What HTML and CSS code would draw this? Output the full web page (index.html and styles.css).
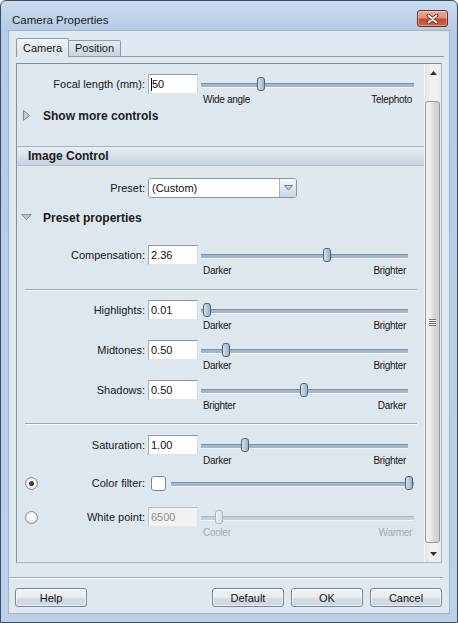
FILE: index.html
```html
<!DOCTYPE html>
<html>
<head>
<meta charset="utf-8">
<title>Camera Properties</title>
<link rel="stylesheet" href="styles.css">
</head>
<body>
<div class="window">
  <div class="titlebar">
    <span class="title">Camera Properties</span>
    <div class="close">
      <svg width="13" height="10" viewBox="0 0 13 10">
        <path d="M2.5 1.5 L10.5 8.5 M10.5 1.5 L2.5 8.5" stroke="#4a1c14" stroke-width="3.6" stroke-linecap="round"/>
        <path d="M2.5 1.5 L10.5 8.5 M10.5 1.5 L2.5 8.5" stroke="#ffffff" stroke-width="2" stroke-linecap="round"/>
      </svg>
    </div>
  </div>
  <div class="client">
    <div class="tabs">
      <div class="tab active">Camera</div>
      <div class="tab">Position</div>
    </div>
    <div class="panel">
      <div class="content">
        <div class="row focal">
          <span class="lbl">Focal length (mm):</span>
          <span class="field"><span class="caret"></span>50</span>
          <div class="slider long">
            <div class="track"><i class="thumb" style="left:56px"></i></div>
            <div class="ends"><span>Wide angle</span><span>Telephoto</span></div>
          </div>
        </div>
        <div class="expander">
          <span class="exp-icon"><svg width="7" height="11" viewBox="0 0 7 11"><polygon points="0.5,0.5 6.5,5.5 0.5,10.5" fill="#c3ccd6" stroke="#7b8a9b"/></svg></span>
          <span class="exp-text">Show more controls</span>
        </div>
        <div class="section-head">Image Control</div>
        <div class="row preset">
          <span class="lbl">Preset:</span>
          <div class="combo">
            <span class="combo-text">(Custom)</span>
            <span class="combo-btn"><svg width="9" height="6" viewBox="0 0 9 6"><polygon points="0.5,0.5 8.5,0.5 4.5,5" fill="#c9d3de" stroke="#6a7c8f"/></svg></span>
          </div>
        </div>
        <div class="expander open">
          <span class="exp-icon"><svg width="11" height="6" viewBox="0 0 11 6"><polygon points="0.5,0.5 10.5,0.5 5.5,5.5" fill="#b7c3cf" stroke="#8593a3"/></svg></span>
          <span class="exp-text">Preset properties</span>
        </div>
        <div class="row comp">
          <span class="lbl">Compensation:</span>
          <span class="field">2.36</span>
          <div class="slider">
            <div class="track"><i class="thumb" style="left:122px"></i></div>
            <div class="ends"><span>Darker</span><span>Brighter</span></div>
          </div>
        </div>
        <div class="sep sep-a"></div>
        <div class="row highlights">
          <span class="lbl">Highlights:</span>
          <span class="field">0.01</span>
          <div class="slider">
            <div class="track"><i class="thumb" style="left:2px"></i></div>
            <div class="ends"><span>Darker</span><span>Brighter</span></div>
          </div>
        </div>
        <div class="row tone">
          <span class="lbl">Midtones:</span>
          <span class="field">0.50</span>
          <div class="slider">
            <div class="track"><i class="thumb" style="left:21px"></i></div>
            <div class="ends"><span>Darker</span><span>Brighter</span></div>
          </div>
        </div>
        <div class="row tone">
          <span class="lbl">Shadows:</span>
          <span class="field">0.50</span>
          <div class="slider">
            <div class="track"><i class="thumb" style="left:99px"></i></div>
            <div class="ends"><span>Brighter</span><span>Darker</span></div>
          </div>
        </div>
        <div class="sep sep-b"></div>
        <div class="row saturation">
          <span class="lbl">Saturation:</span>
          <span class="field">1.00</span>
          <div class="slider">
            <div class="track"><i class="thumb" style="left:40px"></i></div>
            <div class="ends"><span>Darker</span><span>Brighter</span></div>
          </div>
        </div>
        <div class="row filter">
          <span class="lbl"><span class="radio checked"></span><span class="lbl-text">Color filter:</span></span>
          <span class="swatch"></span>
          <div class="slider filter-slider">
            <div class="track"><i class="thumb" style="left:234px"></i></div>
          </div>
        </div>
        <div class="row white disabled">
          <span class="lbl"><span class="radio"></span><span class="lbl-text">White point:</span></span>
          <span class="field">6500</span>
          <div class="slider long">
            <div class="track"><i class="thumb" style="left:14px"></i></div>
            <div class="ends"><span>Cooler</span><span>Warmer</span></div>
          </div>
        </div>
      </div>
      <div class="scrollbar">
        <div class="sb-btn"><svg width="7" height="4" viewBox="0 0 7 4"><polygon points="0,4 7,4 3.5,0" fill="#2e2e2e"/></svg></div>
        <div class="sb-track">
          <div class="sb-thumb"><span class="grip"></span></div>
        </div>
        <div class="sb-btn"><svg width="7" height="4" viewBox="0 0 7 4"><polygon points="0,0 7,0 3.5,4" fill="#2e2e2e"/></svg></div>
      </div>
    </div>
    <div class="divider"></div>
    <div class="buttons">
      <button class="btn help">Help</button>
      <span class="spacer"></span>
      <button class="btn">Default</button>
      <button class="btn">OK</button>
      <button class="btn">Cancel</button>
    </div>
  </div>
</div>
</body>
</html>
```

FILE: styles.css
```css
* { box-sizing: border-box; }
html, body { margin: 0; padding: 0; background: #ffffff; }
body {
  font-family: "Liberation Sans", Arial, sans-serif;
  font-size: 11px;
  color: #1b1b1b;
}

.window {
  width: 458px;
  height: 623px;
  border: 1px solid #3d4d61;
  border-radius: 6px 6px 0 0;
  background: linear-gradient(#c9dbef 0, #b5cce6 29px, #bcd2ea 100%);
  display: flex;
  flex-direction: column;
  padding: 0 7px 8px 7px;
}

.titlebar {
  height: 29px;
  flex: none;
  display: flex;
  align-items: flex-start;
  justify-content: space-between;
  padding: 0 2px 0 4px;
}
.title {
  font-size: 11.5px;
  line-height: 14px;
  margin-top: 12px;
  color: #1a1a1a;
}
.close {
  margin-top: 9px;
  width: 31px;
  height: 17px;
  border: 1px solid #6a2c22;
  border-radius: 3px;
  background: linear-gradient(#e9ab9c 0%, #dc8f7d 45%, #c74a31 55%, #cf6045 100%);
  box-shadow: inset 0 0 0 1px rgba(255, 230, 220, 0.45);
  display: flex;
  align-items: center;
  justify-content: center;
}

.client {
  flex: 1;
  border: 1px solid #9fb4cb;
  background: #dfe7ef;
  padding: 7px 7px 0 7px;
  display: flex;
  flex-direction: column;
}

/* tabs */
.tabs {
  height: 19px;
  flex: none;
  display: flex;
  align-items: flex-end;
  border-bottom: 1px solid #8c9cae;
  margin-right: -2px;
}
.tab {
  width: 52px;
  height: 16px;
  line-height: 14px;
  text-align: center;
  border: 1px solid #8c9cae;
  border-left: none;
  border-bottom: none;
  border-radius: 0 2px 0 0;
  background: linear-gradient(#e4eaf1, #c9d4e0);
  color: #1b1b1b;
}
.tab.active {
  width: 53px;
  height: 19px;
  line-height: 18px;
  margin-bottom: -1px;
  border-left: 1px solid #8c9cae;
  border-radius: 2px 2px 0 0;
  background: linear-gradient(#f2f5f8, #e2e9f0 60%, #dfe7ef);
  position: relative;
}

/* panel */
.panel {
  margin-top: 6px;
  height: 500px;
  flex: none;
  border: 1px solid #8593a2;
  border-color: #7f8c9a #aab5c1 #aab5c1 #8593a2;
  background: #dfe7ee;
  display: flex;
}
.content {
  flex: 1;
  overflow: hidden;
}

.row {
  display: flex;
  align-items: flex-start;
}
.lbl {
  width: 128px;
  flex: none;
  height: 20px;
  line-height: 20px;
  text-align: right;
  display: flex;
  align-items: center;
  justify-content: flex-end;
  color: #161616;
}
.lbl-text { margin-left: auto; }
.field {
  width: 50px;
  height: 20px;
  flex: none;
  margin-left: 3px;
  background: #ffffff;
  border: 1px solid;
  border-color: #8f98a3 #d4d9df #e0e4e9 #a3abb5;
  line-height: 18px;
  padding-left: 2px;
  color: #111;
  display: flex;
  align-items: center;
}
.caret {
  display: inline-block;
  width: 1px;
  height: 13px;
  background: #000;
}

.slider {
  width: 207px;
  flex: none;
  margin-left: 3px;
}
.slider.long { width: 213px; }
.track {
  position: relative;
  height: 20px;
}
.track::before {
  content: "";
  position: absolute;
  left: 0;
  right: 0;
  top: 9px;
  height: 3px;
  border-top: 1px solid #7d91a5;
  border-bottom: 1px solid #f3f6f9;
  background: #a5b5c5;
}
.thumb {
  position: absolute;
  top: 3px;
  width: 8px;
  height: 14px;
  border: 1px solid #4f6377;
  border-radius: 3px;
  background: linear-gradient(to right, #d6e0ea, #b3c3d3 60%, #9cafc3);
}
.ends {
  display: flex;
  justify-content: space-between;
  padding: 0 2px;
  height: 12px;
  line-height: 12px;
  font-size: 10px;
  letter-spacing: -0.3px;
  color: #161616;
}

/* expanders */
.expander {
  height: 18px;
  display: flex;
  align-items: center;
  padding-left: 4px;
}
.exp-icon {
  width: 11px;
  display: flex;
  justify-content: center;
  margin-right: 11px;
}
.expander .exp-icon svg { display: block; }
.exp-text {
  font-size: 12px;
  font-weight: bold;
  color: #1a1a1a;
  margin-top: 2px;
}

.section-head {
  margin-top: 22px;
  height: 20px;
  border-top: 1px solid #a5b1be;
  border-bottom: 1px solid #b3c0cc;
  background: linear-gradient(#e8eef4, #d4dee7 60%, #c5d2de);
  line-height: 18px;
  padding-left: 11px;
  font-size: 12px;
  font-weight: bold;
  color: #1a1a1a;
}

/* vertical rhythm */
.row.focal { margin-top: 10px; }
.row.preset { margin-top: 12px; }
.expander.open { margin-top: 10px; }
.row.comp { margin-top: 19px; }
.row.highlights { margin-top: 9px; }
.row.tone { margin-top: 8px; }
.row.saturation { margin-top: 10px; }
.row.filter { margin-top: 8px; height: 16px; align-items: center; }
.row.white { margin-top: 16px; }

.sep {
  height: 2px;
  margin: 0 7px 0 8px;
  border-top: 1px solid #9aa6b2;
  border-bottom: 1px solid #f7f9fb;
}
.sep-a { margin-top: 12px; }
.sep-b { margin-top: 11px; }

/* combo */
.combo {
  margin-left: 3px;
  width: 149px;
  height: 20px;
  border: 1px solid #8795a4;
  border-radius: 3px;
  background: #ffffff;
  display: flex;
}
.combo-text {
  line-height: 18px;
  padding-left: 3px;
  color: #111;
}
.combo-btn {
  margin-left: auto;
  width: 17px;
  border-left: 1px solid #a7b3c0;
  border-radius: 0 2px 2px 0;
  background: linear-gradient(#f4f7fa, #dfe6ee 50%, #cdd7e2);
  display: flex;
  align-items: center;
  justify-content: center;
}

/* color filter row */
.row.filter .lbl { height: 16px; line-height: 16px; }
.radio {
  width: 13px;
  height: 13px;
  flex: none;
  margin-left: 8px;
  border: 1px solid #8a8c8e;
  border-radius: 50%;
  background: radial-gradient(circle at 50% 45%, #ffffff 30%, #e9e9e9 65%, #d2d2d2);
  display: flex;
  align-items: center;
  justify-content: center;
}
.radio.checked::after {
  content: "";
  width: 5px;
  height: 5px;
  border-radius: 50%;
  background: radial-gradient(circle at 40% 40%, #555, #0d0d0d);
}
.swatch {
  width: 15px;
  height: 15px;
  flex: none;
  margin-left: 6px;
  border: 1px solid #74879a;
  border-radius: 3px;
  background: #ffffff;
}
.slider.filter-slider {
  width: 243px;
  margin-left: 5px;
}
.filter-slider .track { height: 16px; }
.filter-slider .track::before { top: 7px; }
.filter-slider .thumb { top: 1px; }

/* disabled */
.disabled .field {
  background: #f0f2f4;
  color: #8d8d8d;
  border-color: #b3bac2 #dde1e6 #e4e7eb #c0c6cd;
}
.disabled .track::before {
  background: #c7d0d9;
  border-top-color: #aeb9c4;
}
.disabled .thumb {
  border-color: #a9b4bf;
  background: linear-gradient(to right, #ecf0f4, #d9e1e8);
}
.disabled .ends { color: #a6a9ad; }

/* scrollbar */
.scrollbar {
  width: 17px;
  flex: none;
  display: flex;
  flex-direction: column;
  background: linear-gradient(to right, #e2e2e2, #efefef 30%, #f1f1f1 70%, #e9e9e9);
  border-left: 1px solid #f6f6f6;
}
.sb-btn {
  height: 17px;
  flex: none;
  display: flex;
  align-items: center;
  justify-content: center;
}
.sb-track { flex: 1; }
.sb-thumb {
  margin: 20px 1px 0 0;
  height: 442px;
  border: 1px solid #979797;
  border-radius: 3px;
  background: linear-gradient(to right, #f4f4f4, #e9e9e9 45%, #d8d8d8 55%, #cfcfcf);
  display: flex;
  align-items: center;
  justify-content: center;
}
.grip {
  width: 7px;
  height: 7px;
  background: repeating-linear-gradient(#6f6f6f 0 1px, #f5f5f5 1px 2px);
}

/* footer */
.divider {
  margin: 14px -1px 0 -7px;
  height: 2px;
  border-top: 1px solid #a1acb8;
  border-bottom: 1px solid #fbfcfd;
}
.buttons {
  margin-top: 9px;
  display: flex;
  gap: 7px;
}
.spacer { flex: 1; }
.btn {
  width: 72px;
  height: 19px;
  padding: 0;
  font-family: "Liberation Sans", Arial, sans-serif;
  font-size: 11px;
  color: #151515;
  border: 1px solid #7a8796;
  border-radius: 3px;
  background: linear-gradient(#f3f5f7, #e6eaee 50%, #d6dce3 52%, #d0d7df);
  box-shadow: inset 0 0 0 1px rgba(255, 255, 255, 0.6);
}
.btn.help { margin-left: -1px; }
```
